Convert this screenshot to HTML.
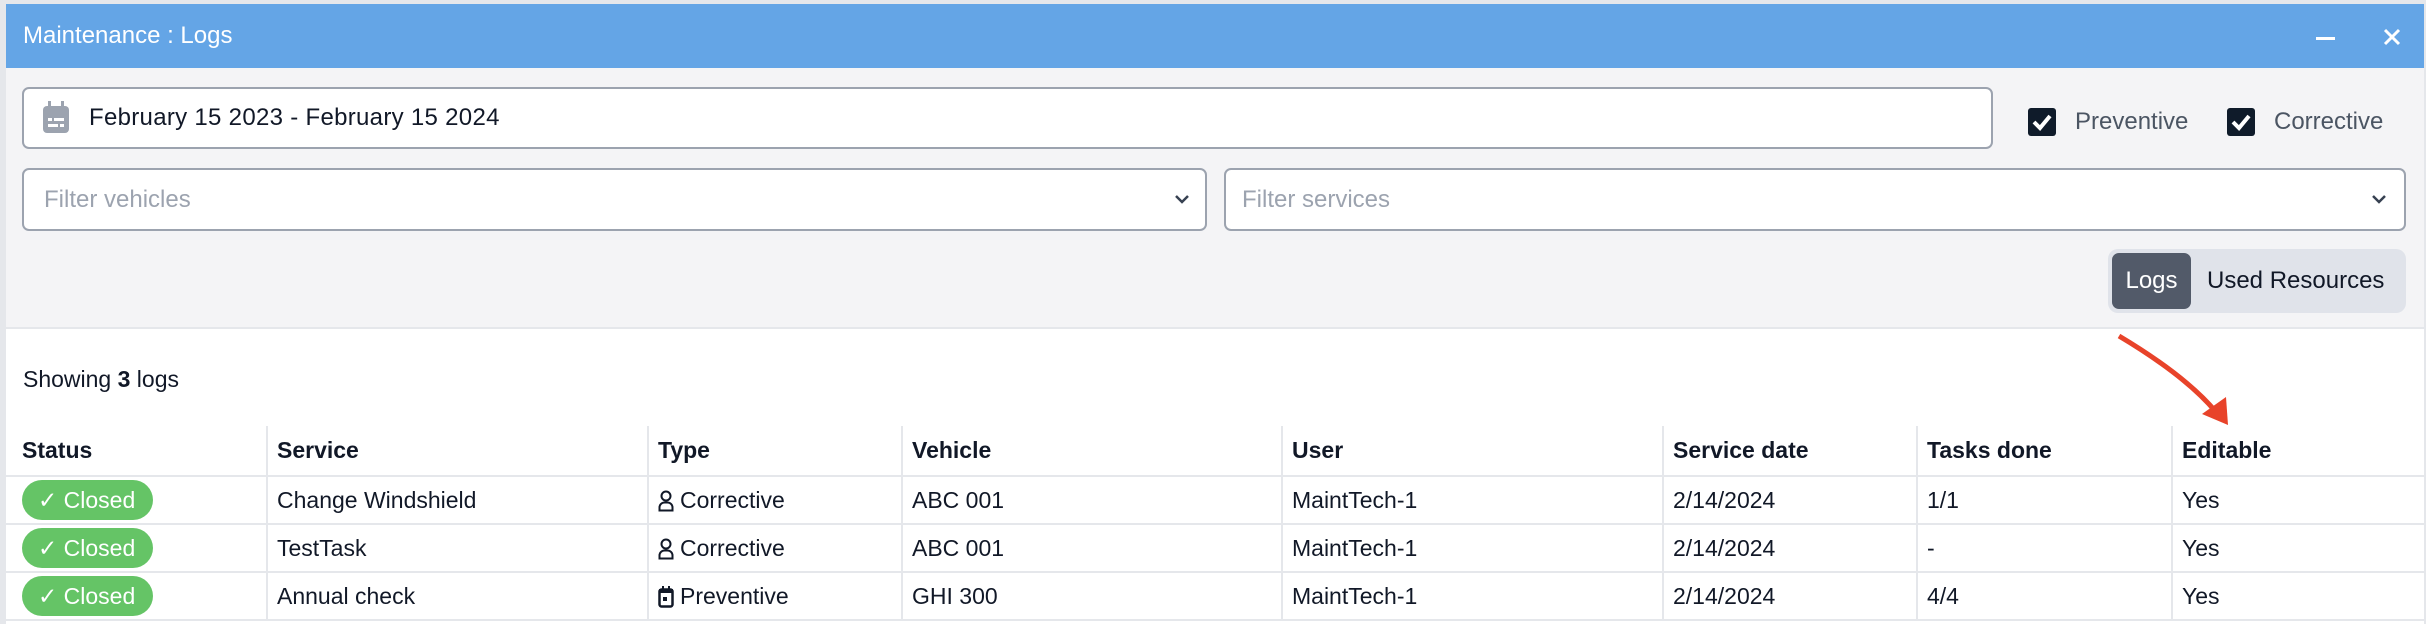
<!DOCTYPE html>
<html><head><meta charset="utf-8"><style>
*{box-sizing:border-box;margin:0;padding:0}
body{width:2426px;height:620px;overflow:hidden;background:#e5e7eb;font-family:"Liberation Sans",sans-serif;color:#111827;position:relative}
.dlg{position:absolute;left:6px;top:4px;width:2418px;height:620px;background:#fff}
.title{position:absolute;left:0;top:0;width:100%;height:64px;background:#64a5e6;color:#fff;font-size:24px;line-height:64px;padding-left:17px}
.top{position:absolute;left:0;top:64px;width:100%;height:261px;background:#f4f4f6;border-bottom:2px solid #e5e7eb}
.inp{position:absolute;background:#fff;border:2px solid #9ca3af;border-radius:7px}
.abs{position:absolute}
.cb{position:absolute;width:28px;height:28px;background:#0f1b2a;border-radius:3px}
.lbl{position:absolute;font-size:24px;color:#4b5563;line-height:28px}
table{position:absolute;left:0;top:422px;border-collapse:collapse;font-size:23px}
td,th{height:48px;border-bottom:2px solid #e5e7eb;border-left:2px solid #e5e7eb;text-align:left;padding-left:9px;white-space:nowrap}
th{font-weight:bold;height:50px}
td:first-child,th:first-child{border-left:none;padding-left:16px}
.badge{display:inline-block;background:#65c466;color:#fff;border-radius:20px;height:40px;line-height:40px;padding:0 18px 0 16px;font-size:23px}
.ic{vertical-align:-4px;margin-right:6px}
</style></head><body>
<div class="dlg">
 <div class="title">Maintenance : Logs
  <div class="abs" style="left:2310px;top:33px;width:19px;height:3px;background:#fff"></div>
  <svg class="abs" style="left:2377px;top:24px" width="18" height="18" viewBox="0 0 18 18"><path d="M2 2L16 16M16 2L2 16" stroke="#fff" stroke-width="3"/></svg>
 </div>
 <div class="top">
  <div class="inp" style="left:16px;top:19px;width:1971px;height:62px">
   <svg class="abs" style="left:18px;top:12px" width="30" height="33" viewBox="0 0 30 33"><rect x="1" y="5" width="26" height="27" rx="4" fill="#9ca3af"/><rect x="6" y="0" width="3" height="8" fill="#9ca3af"/><rect x="19" y="0" width="3" height="8" fill="#9ca3af"/><rect x="6" y="17" width="4" height="3" fill="#fff"/><rect x="12" y="17" width="10" height="3" fill="#fff"/><rect x="6" y="23" width="10" height="3" fill="#fff"/><rect x="18" y="23" width="4" height="3" fill="#fff"/></svg>
   <div class="abs" style="left:65px;top:0;line-height:58px;font-size:24px;letter-spacing:.3px">February 15 2023 - February 15 2024</div>
  </div>
  <div class="cb" style="left:2022px;top:40px"><svg width="28" height="28"><path d="M6 14l6 6 10-12" stroke="#fff" stroke-width="4" fill="none"/></svg></div>
  <div class="lbl" style="left:2069px;top:40px">Preventive</div>
  <div class="cb" style="left:2221px;top:40px"><svg width="28" height="28"><path d="M6 14l6 6 10-12" stroke="#fff" stroke-width="4" fill="none"/></svg></div>
  <div class="lbl" style="left:2268px;top:40px">Corrective</div>
  <div class="inp" style="left:16px;top:100px;width:1185px;height:63px">
   <div class="abs" style="left:20px;line-height:59px;font-size:24px;color:#9ca3af">Filter vehicles</div>
   <svg class="abs" style="left:1150px;top:24px" width="16" height="10"><path d="M2 2l6 6 6-6" stroke="#374151" stroke-width="2.5" fill="none"/></svg>
  </div>
  <div class="inp" style="left:1218px;top:100px;width:1182px;height:63px">
   <div class="abs" style="left:16px;line-height:59px;font-size:24px;color:#9ca3af">Filter services</div>
   <svg class="abs" style="left:1145px;top:24px" width="16" height="10"><path d="M2 2l6 6 6-6" stroke="#374151" stroke-width="2.5" fill="none"/></svg>
  </div>
  <div class="abs" style="left:2102px;top:181px;width:298px;height:64px;background:#e0e3ea;border-radius:10px">
   <div class="abs" style="left:4px;top:4px;width:79px;height:56px;background:#525a69;border-radius:7px;color:#fff;font-size:24px;line-height:56px;text-align:center">Logs</div>
   <div class="abs" style="left:99px;top:4px;line-height:56px;font-size:24px;color:#111827">Used Resources</div>
  </div>
 </div>
 <div class="abs" style="left:17px;top:362px;font-size:23px">Showing <b>3</b> logs</div>
 <table>
  <tr><th style="width:261px">Status</th><th style="width:381px">Service</th><th style="width:254px">Type</th><th style="width:380px">Vehicle</th><th style="width:381px">User</th><th style="width:254px">Service date</th><th style="width:255px">Tasks done</th><th style="width:252px">Editable</th></tr>
  <tr><td><span class="badge">✓ Closed</span></td><td>Change Windshield</td><td><svg class="ic" width="16" height="22" viewBox="0 0 16 22"><circle cx="8" cy="6" r="4.5" stroke="#111827" stroke-width="2" fill="none"/><path d="M1.5 20.5v-3a5 5 0 0 1 5-5h3a5 5 0 0 1 5 5v3z" stroke="#111827" stroke-width="2" fill="none"/></svg>Corrective</td><td>ABC 001</td><td>MaintTech-1</td><td>2/14/2024</td><td>1/1</td><td>Yes</td></tr>
  <tr><td><span class="badge">✓ Closed</span></td><td>TestTask</td><td><svg class="ic" width="16" height="22" viewBox="0 0 16 22"><circle cx="8" cy="6" r="4.5" stroke="#111827" stroke-width="2" fill="none"/><path d="M1.5 20.5v-3a5 5 0 0 1 5-5h3a5 5 0 0 1 5 5v3z" stroke="#111827" stroke-width="2" fill="none"/></svg>Corrective</td><td>ABC 001</td><td>MaintTech-1</td><td>2/14/2024</td><td>-</td><td>Yes</td></tr>
  <tr><td><span class="badge">✓ Closed</span></td><td>Annual check</td><td><svg class="ic" width="16" height="22" viewBox="0 0 16 22"><rect x="1.5" y="3.5" width="13" height="17" rx="2" stroke="#111827" stroke-width="2.5" fill="none"/><rect x="1" y="3" width="14" height="4" fill="#111827"/><rect x="4" y="0" width="2" height="4" fill="#111827"/><rect x="10" y="0" width="2" height="4" fill="#111827"/><rect x="5" y="11" width="4" height="4" fill="#111827"/></svg>Preventive</td><td>GHI 300</td><td>MaintTech-1</td><td>2/14/2024</td><td>4/4</td><td>Yes</td></tr>
 </table>
 <svg class="abs" style="left:0;top:0" width="2418" height="620"><path d="M2113 332 Q2180 372 2210 408" stroke="#e8432a" stroke-width="5" fill="none"/><path d="M2196 410 L2222 421 L2220 393 Z" fill="#e8432a"/></svg>
</div>
</body></html>
